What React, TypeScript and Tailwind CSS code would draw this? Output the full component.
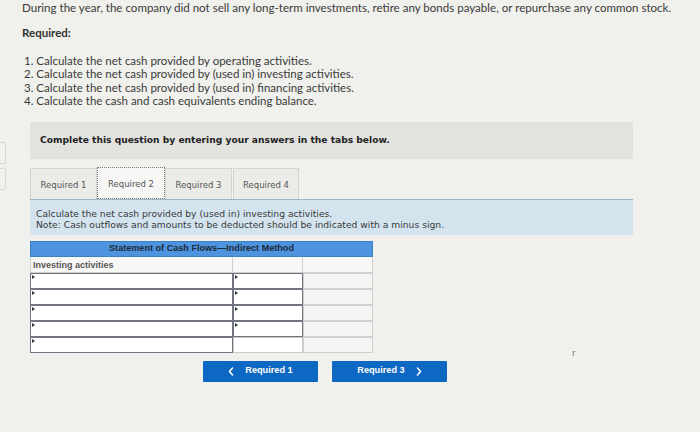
import React from "react";

const sans = { fontFamily: "Lato, 'Open Sans', sans-serif" };

function InputRow({ dark2 }: { dark2: boolean }) {
  return (
    <div className="flex h-[16px]">
      <div className="relative w-[203px] h-full border border-[#6f7480] bg-white">
        <span className="absolute left-[1px] top-[1px] w-0 h-0 border-t-[2.5px] border-b-[2.5px] border-l-[3px] border-t-transparent border-b-transparent border-l-[#333]" />
      </div>
      <div className={`relative w-[70px] h-full border bg-white ${dark2 ? "border-[#6f7480]" : "border-[#c9c9c9]"}`}>
        {dark2 && (
          <span className="absolute left-[1px] top-[1px] w-0 h-0 border-t-[2.5px] border-b-[2.5px] border-l-[3px] border-t-transparent border-b-transparent border-l-[#333]" />
        )}
      </div>
      <div className="w-[70px] h-full border border-[#cfcfcf] bg-[#f4f4f2]" />
    </div>
  );
}

function Chevron({ dir }: { dir: "left" | "right" }) {
  return (
    <svg width="6" height="9" viewBox="0 0 6 9" className="shrink-0">
      <path
        d={dir === "left" ? "M4.5 1 L1.5 4.5 L4.5 8" : "M1.5 1 L4.5 4.5 L1.5 8"}
        fill="none"
        stroke="white"
        strokeWidth="1.6"
        strokeLinecap="round"
        strokeLinejoin="round"
      />
    </svg>
  );
}

export default function App() {
  return (
    <div className="relative w-[700px] h-[432px] overflow-hidden bg-[#f0f0ec] text-[#333]">
      {/* left edge partial boxes */}
      <div className="absolute left-[-6px] top-[142px] w-[12px] h-[22px] border border-[#d8d8d4] rounded-[2px]" />
      <div className="absolute left-[-6px] top-[168px] w-[12px] h-[22px] border border-[#d8d8d4] rounded-[2px]" />

      <div className="pl-[22px] pt-[1px]" style={sans}>
        <p className="text-[11.55px] leading-[14px] text-[#3a3a3a]">
          During the year, the company did not sell any long-term investments, retire any bonds payable, or repurchase any common stock.
        </p>
        <p className="mt-[11px] text-[11.5px] leading-[14px] font-bold text-[#333]">Required:</p>
        <ol className="mt-[14px] ml-[2px] text-[11.5px] leading-[13.4px] text-[#3a3a3a]">
          <li>1. Calculate the net cash provided by operating activities.</li>
          <li>2. Calculate the net cash provided by (used in) investing activities.</li>
          <li>3. Calculate the net cash provided by (used in) financing activities.</li>
          <li>4. Calculate the cash and cash equivalents ending balance.</li>
        </ol>
      </div>

      <div className="ml-[30px] w-[603px]" style={{ fontFamily: "'DejaVu Sans', Verdana, sans-serif" }}>
        <div className="mt-[14px] h-[37px] bg-[#e2e2df] flex items-center pl-[10px] pt-[1px]">
          <span className="text-[9.15px] font-bold text-[#222]">Complete this question by entering your answers in the tabs below.</span>
        </div>

        <div className="mt-[8px] flex h-[32px] items-end">
          <div className="w-[67px] h-[31px] pt-[3px] border border-[#d4d4d0] border-b-0 bg-[#ebebe8] flex items-center justify-center text-[8.5px] text-[#555]">Required 1</div>
          <div className="w-[68px] h-[32px] pt-[3px] border border-dotted border-[#777] bg-[#f6f6f4] flex items-center justify-center text-[8.5px] text-[#555]">Required 2</div>
          <div className="w-[67px] h-[31px] pt-[3px] border border-[#d4d4d0] border-b-0 bg-[#ebebe8] flex items-center justify-center text-[8.5px] text-[#555]">Required 3</div>
          <div className="ml-[1px] w-[66px] h-[31px] pt-[3px] border border-[#d4d4d0] border-b-0 bg-[#ebebe8] flex items-center justify-center text-[8.5px] text-[#555]">Required 4</div>
        </div>

        <div className="h-[36px] bg-[#d3e4ee] border-t border-[#9fb6c4] pl-[6px] pt-[8px] text-[9.2px] leading-[11px] text-[#3a3a3a]">
          <div>Calculate the net cash provided by (used in) investing activities.</div>
          <div>Note: Cash outflows and amounts to be deducted should be indicated with a minus sign.</div>
        </div>

        <div className="mt-[6px] w-[343px]" style={{ fontFamily: "'Liberation Sans', Arial, sans-serif" }}>
          <div className="h-[16px] bg-[#4d93de] border border-[#3f7fc4] flex items-center justify-center text-[9.1px] font-bold text-[#1d2a3a]">
            Statement of Cash Flows—Indirect Method
          </div>
          <div className="flex h-[16px] bg-[#f7f7f5]">
            <div className="w-[203px] h-full border border-t-0 border-[#cfcfcf] pl-[2px] pt-[3px] flex items-center text-[9px] font-bold text-[#555]">Investing activities</div>
            <div className="w-[70px] h-full border border-t-0 border-l-0 border-[#cfcfcf]" />
            <div className="w-[70px] h-full border border-t-0 border-l-0 border-[#cfcfcf]" />
          </div>
          <InputRow dark2 />
          <InputRow dark2 />
          <InputRow dark2 />
          <InputRow dark2 />
          <InputRow dark2={false} />
        </div>
      </div>

      <div className="mt-[8px] ml-[203px] flex gap-[14px]" style={{ fontFamily: "'Liberation Sans', Arial, sans-serif" }}>
        <div className="w-[115px] h-[21px] bg-[#0c68c2] rounded-[1px] flex items-center justify-center gap-[11px] text-white text-[9.2px] font-bold">
          <Chevron dir="left" />
          <span>Required 1</span>
        </div>
        <div className="w-[115px] h-[21px] bg-[#0c68c2] rounded-[1px] flex items-center justify-center gap-[11px] text-white text-[9.2px] font-bold">
          <span>Required 3</span>
          <Chevron dir="right" />
        </div>
      </div>

      <span className="absolute left-[572px] top-[346px] text-[9px] text-[#777]">r</span>
    </div>
  );
}
